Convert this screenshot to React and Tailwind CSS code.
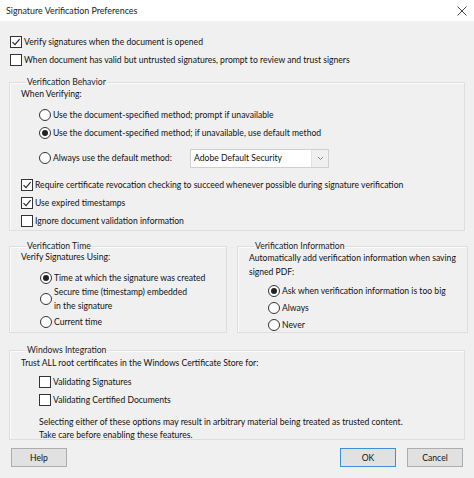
import { useState } from "react";

// Signature verification preferences dialog

function Check({ checked, children, className = "" }) {
    return (
        <label className={`flex items-center gap-[2px] h-[18px] whitespace-nowrap ${className}`}>
            <span className="w-[12px] h-[12px] border border-[#333] bg-white flex items-center justify-center shrink-0">
                {checked && (
                    <svg width="10" height="10" viewBox="0 0 10 10">
                        <path d="M1.5 5.2 L4 7.6 L8.6 2.2" fill="none" stroke="#222" strokeWidth="1.1" />
                    </svg>
                )}
            </span>
            <span>{children}</span>
        </label>
    );
}

function Radio({ checked, children, className = "" }) {
    return (
        <label className={`flex items-center gap-[2px] whitespace-nowrap ${className}`}>
            <span className="w-[12px] h-[12px] rounded-full border border-[#333] bg-white flex items-center justify-center shrink-0">
                {checked && <span className="w-[6px] h-[6px] rounded-full bg-[#222]" />}
            </span>
            <span>{children}</span>
        </label>
    );
}

function Group({ title, className = "", children }) {
    return (
        <fieldset className={`border border-[#dedede] shadow-[inset_1px_1px_0_#fafafa] px-[11px] ${className}`}>
            <legend className="ml-[5px] px-[1px] text-[#222]">{title}</legend>
            {children}
        </fieldset>
    );
}

export default function App() {
    const [method] = useState(1);

    return (
        <div
            className="w-[474px] h-[478px] bg-[#f0f0f0] text-[8.6px] leading-[14px] text-[#111] overflow-hidden"
            style={{ fontFamily: 'Lato, "Liberation Sans", sans-serif' }}
        >
            <div className="h-[21px] bg-white flex items-center justify-between pl-[6px] pr-[6px]">
                <span className="text-[8.9px] text-[#222]">Signature Verification Preferences</span>
                <svg width="12" height="12" viewBox="0 0 12 12">
                    <path d="M1.5 1.5 L10.5 10.5 M10.5 1.5 L1.5 10.5" stroke="#444" strokeWidth="1" />
                </svg>
            </div>

            <div className="px-[9px] pt-[12px]">
                <div className="pl-[1px]">
                    <Check checked>Verify signatures when the document is opened</Check>
                    <Check>When document has valid but untrusted signatures, prompt to review and trust signers</Check>
                </div>

                <Group title="Verification Behavior" className="mt-[6px]">
                    <div className="mt-[-2px]">When Verifying:</div>
                    <div className="pl-[18px] mt-[5px] flex flex-col">
                        <Radio checked={method === 0} className="h-[18px]">
                            Use the document-specified method; prompt if unavailable
                        </Radio>
                        <Radio checked={method === 1} className="h-[18px]">
                            Use the document-specified method; if unavailable, use default method
                        </Radio>
                        <div className="flex items-center mt-[6px] h-[20px]">
                            <Radio checked={method === 2} className="w-[151px] shrink-0">
                                Always use the default method:
                            </Radio>
                            <div className="w-[139px] h-[19px] shrink-0 bg-white border border-[#cfcfcf] flex items-center justify-between">
                                <span className="pl-[3px]">Adobe Default Security</span>
                                <span className="w-[17px] h-full bg-[#f0f0f0] border-l border-[#e2e2e2] flex items-center justify-center">
                                    <svg width="7" height="5" viewBox="0 0 7 5">
                                        <path d="M1 1 L3.5 3.5 L6 1" fill="none" stroke="#777" strokeWidth="0.9" />
                                    </svg>
                                </span>
                            </div>
                        </div>
                    </div>
                    <div className="mt-[8px] flex flex-col">
                        <Check checked className="h-[16px]">
                            Require certificate revocation checking to succeed whenever possible during signature verification
                        </Check>
                        <Check checked className="h-[18px]">Use expired timestamps</Check>
                        <Check className="h-[18px]">Ignore document validation information</Check>
                    </div>
                </Group>

                <div className="flex gap-[10px] mt-[8px] items-start">
                    <Group title="Verification Time" className="w-[218px] h-[94px] shrink-0">
                        <div className="mt-[-3px]">Verify Signatures Using:</div>
                        <div className="pl-[19px] mt-[7px] flex flex-col">
                            <Radio checked>Time at which the signature was created</Radio>
                            <Radio>
                                <span className="block">
                                    Secure time (timestamp) embedded
                                    <br />
                                    in the signature
                                </span>
                            </Radio>
                            <Radio className="mt-[2px]">Current time</Radio>
                        </div>
                    </Group>

                    <Group title="Verification Information" className="flex-1 h-[94px] px-[8px]">
                        <div className="mt-[-2px] whitespace-nowrap">
                            Automatically add verification information when saving
                            <br />
                            signed PDF:
                        </div>
                        <div className="pl-[19px] mt-[5px] flex flex-col gap-[4px]">
                            <Radio checked>Ask when verification information is too big</Radio>
                            <Radio className="mt-[-1px]">Always</Radio>
                            <Radio className="mt-[-1px]">Never</Radio>
                        </div>
                    </Group>
                </div>

                <Group title="Windows Integration" className="mt-[10px] h-[97px]">
                    <div className="mt-[-1px]">Trust ALL root certificates in the Windows Certificate Store for:</div>
                    <div className="pl-[18px] mt-[3px] flex flex-col">
                        <Check>Validating Signatures</Check>
                        <Check>Validating Certified Documents</Check>
                    </div>
                    <div className="pl-[18px] mt-[7px] leading-[13px]">
                        Selecting either of these options may result in arbitrary material being treated as trusted content.
                        <br />
                        Take care before enabling these features.
                    </div>
                </Group>

                <div className="flex justify-between mt-[8px] px-[2px]">
                    <button className="w-[56px] h-[19px] bg-[#e1e1e1] border border-[#adadad] text-[8.6px]">Help</button>
                    <div className="flex gap-[11px]">
                        <button className="w-[56px] h-[19px] bg-[#e1e1e1] border border-[#3c8fd8] text-[8.6px]">OK</button>
                        <button className="w-[56px] h-[19px] bg-[#e1e1e1] border border-[#adadad] text-[8.6px]">Cancel</button>
                    </div>
                </div>
            </div>
        </div>
    );
}
